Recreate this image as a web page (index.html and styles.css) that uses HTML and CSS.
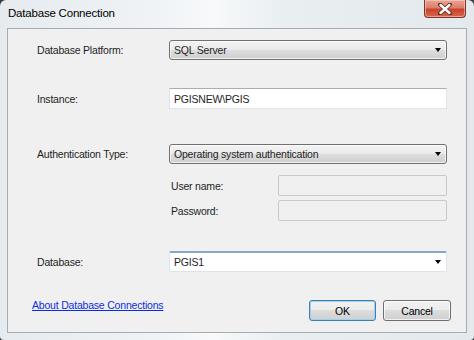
FILE: index.html
```html
<!DOCTYPE html>
<html>
<head>
<meta charset="utf-8">
<link rel="stylesheet" href="styles.css">
</head>
<body>
<div class="window">
  <div class="titlebar">
    <span class="title">Database Connection</span>
    <div class="close">
      <svg width="16" height="12" viewBox="0 0 16 12">
        <path d="M3 1.5 L13 10.5 M13 1.5 L3 10.5" stroke="#5a2a22" stroke-width="4" stroke-linecap="round"/>
        <path d="M3.5 2 L12.5 10 M12.5 2 L3.5 10" stroke="#ffffff" stroke-width="2.4" stroke-linecap="round"/>
      </svg>
    </div>
  </div>
  <div class="client">
    <div class="row r-platform">
      <label class="lbl">Database Platform:</label>
      <div class="select"><span>SQL Server</span><i class="arrow"></i></div>
    </div>
    <div class="row r-instance">
      <label class="lbl">Instance:</label>
      <div class="input">PGISNEW\PGIS</div>
    </div>
    <div class="row r-auth">
      <label class="lbl">Authentication Type:</label>
      <div class="select"><span>Operating system authentication</span><i class="arrow"></i></div>
    </div>
    <div class="sub r-user">
      <label class="sublbl">User name:</label>
      <div class="input disabled"></div>
    </div>
    <div class="sub r-pass">
      <label class="sublbl">Password:</label>
      <div class="input disabled"></div>
    </div>
    <div class="row r-db">
      <label class="lbl">Database:</label>
      <div class="combo"><span>PGIS1</span><i class="arrow"></i></div>
    </div>
    <div class="footer">
      <a class="link" href="#">About Database Connections</a>
      <div class="buttons">
        <button class="btn default">OK</button>
        <button class="btn">Cancel</button>
      </div>
    </div>
  </div>
</div>
</body>
</html>
```
FILE: styles.css
```css
html, body {
  margin: 0;
  padding: 0;
  background: #3a3f44;
}
body {
  width: 474px;
  height: 340px;
  overflow: hidden;
  font-family: "Liberation Sans", Arial, sans-serif;
  font-size: 10.5px;
  letter-spacing: -0.2px;
  color: #1e1e1e;
}
.window {
  width: 474px;
  height: 340px;
  box-sizing: border-box;
  background: linear-gradient(90deg, #e6ebef 0%, #eef2f5 30%, #f7f9fa 45%, #e9eef1 60%, #e4e9ed 100%);
  border-radius: 6px 6px 4px 4px;
  padding: 0 7px 7px 7px;
  display: flex;
  flex-direction: column;
}
.titlebar {
  height: 28px;
  display: flex;
  align-items: flex-start;
  justify-content: space-between;
  flex-shrink: 0;
}
.title {
  margin-top: 7px;
  margin-left: 1px;
  font-size: 11.5px;
  letter-spacing: -0.2px;
  color: #000;
}
.close {
  width: 42px;
  height: 18px;
  box-sizing: border-box;
  border: 1px solid #7e3428;
  border-top: none;
  border-radius: 0 0 4px 4px;
  background: linear-gradient(180deg, #e9a596 0%, #dc7e6a 45%, #c7442c 55%, #d8664c 100%);
  display: flex;
  align-items: center;
  justify-content: center;
  margin-right: 1px;
  box-shadow: inset 0 0 0 1px rgba(255, 220, 210, 0.5);
}
.client {
  flex: 1;
  background: #f0f0f0;
  border: 1px solid #a8acb0;
  padding: 11px 19px 0 29px;
  display: flex;
  flex-direction: column;
}
.row {
  display: flex;
  align-items: center;
}
.lbl {
  width: 132px;
  flex-shrink: 0;
}
.select, .input, .combo {
  flex: 1;
  box-sizing: border-box;
  display: flex;
  align-items: center;
  padding-left: 4px;
  position: relative;
}
.select {
  height: 20px;
  border: 1px solid #707070;
  border-radius: 3px;
  background: linear-gradient(180deg, #f3f3f3 0%, #ebebeb 49%, #dddddd 50%, #cfcfcf 100%);
  box-shadow: inset 0 0 0 1px rgba(255, 255, 255, 0.7);
}
.arrow {
  position: absolute;
  right: 5px;
  top: 50%;
  margin-top: -2px;
  width: 0;
  height: 0;
  border-left: 3.5px solid transparent;
  border-right: 3.5px solid transparent;
  border-top: 4px solid #000;
}
.input {
  height: 21px;
  background: #fff;
  border: 1px solid #e2e3ea;
  border-top-color: #abadb3;
}
.input.disabled {
  background: #f0f0f0;
  border: 1px solid #c9c9c9;
  border-radius: 2px;
}
.combo {
  height: 21px;
  background: #fff;
  border: 1px solid #dde3ea;
  border-top: 2px solid #8aa6c1;
  border-radius: 2px;
}
.r-instance { margin-top: 28px; }
.r-auth { margin-top: 35px; }
.sub {
  display: flex;
  align-items: center;
  padding-left: 132px;
}
.sublbl {
  width: 107px;
  flex-shrink: 0;
  padding-left: 2px;
}
.r-user { margin-top: 11px; }
.r-pass { margin-top: 4px; }
.r-db { margin-top: 30px; }
.footer {
  margin-top: 28px;
  display: flex;
  align-items: center;
  justify-content: space-between;
  margin-left: -5px;
  margin-right: -4px;
}
.link {
  color: #0b2de0;
  text-decoration: underline;
  margin-top: -12px;
}
.buttons {
  display: flex;
  gap: 7px;
}
.btn {
  width: 68px;
  height: 21px;
  box-sizing: border-box;
  font-family: inherit;
  font-size: 10.5px;
  letter-spacing: -0.2px;
  color: #000;
  border: 1px solid #707070;
  border-radius: 3px;
  background: linear-gradient(180deg, #f2f2f2 0%, #ebebeb 49%, #dddddd 50%, #cfcfcf 100%);
  box-shadow: inset 0 0 0 1px rgba(255, 255, 255, 0.7);
  padding: 0;
}
.btn.default {
  width: 67px;
  border-color: #3c7fb1;
  box-shadow: inset 0 0 0 1px #9fd2ef;
}
```
